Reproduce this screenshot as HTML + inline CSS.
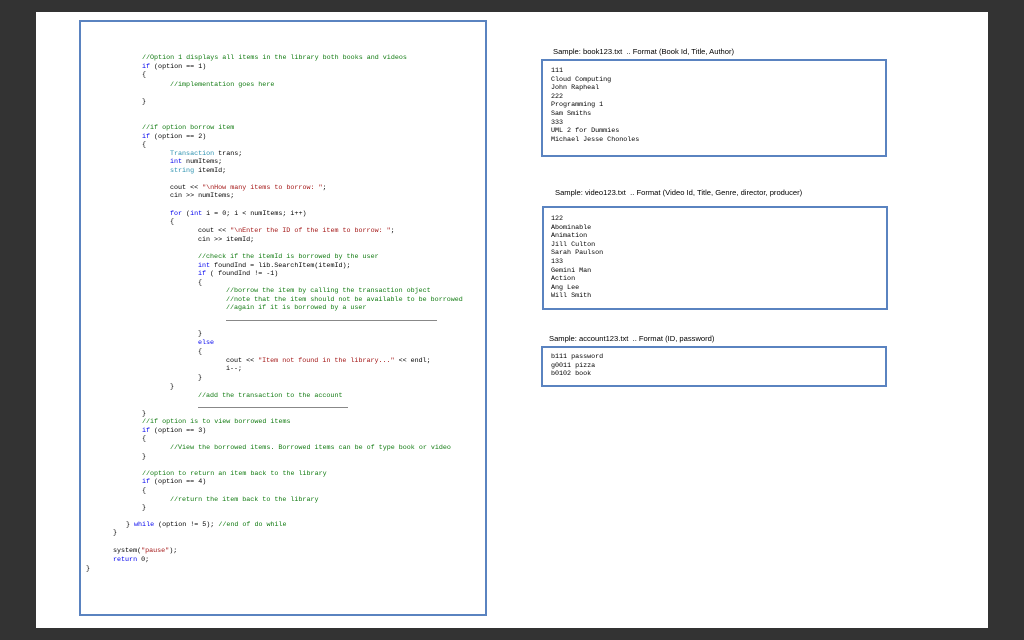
<!DOCTYPE html>
<html><head><meta charset="utf-8">
<style>
html,body{margin:0;padding:0}
body{width:1024px;height:640px;background:#333;position:relative;overflow:hidden}
.page{position:absolute;left:36px;top:12px;width:952px;height:616px;background:#fff}
.box{position:absolute;border:2px solid #5a83c0;box-sizing:border-box}
.l{position:absolute;font-family:"Liberation Mono",monospace;font-size:6.7px;line-height:8px;white-space:pre;color:#000}
.m{line-height:8.6px}
.c{color:#107a10}.k{color:#0000ee}.s{color:#a31515}.t{color:#2b91af}
.lab{position:absolute;font-family:"Liberation Sans",sans-serif;font-size:7.6px;color:#000;white-space:pre}
.u{position:absolute;height:1px;background:#888}
</style></head><body>
<div class="page"></div>
<div class="box" style="left:79px;top:20px;width:408px;height:596px"></div>

<div class="l c" style="left:142px;top:54px">//Option 1 displays all items in the library both books and videos</div>
<div class="l" style="left:142px;top:63px"><span class="k">if</span> (option == 1)</div>
<div class="l" style="left:142px;top:71px">{</div>
<div class="l c" style="left:170px;top:81px">//implementation goes here</div>
<div class="l" style="left:142px;top:98px">}</div>
<div class="l c" style="left:142px;top:124px">//if option borrow item</div>
<div class="l" style="left:142px;top:133px"><span class="k">if</span> (option == 2)</div>
<div class="l" style="left:142px;top:141px">{</div>
<div class="l" style="left:170px;top:150px"><span class="t">Transaction</span> trans;</div>
<div class="l" style="left:170px;top:158px"><span class="k">int</span> numItems;</div>
<div class="l" style="left:170px;top:167px"><span class="t">string</span> itemId;</div>
<div class="l" style="left:170px;top:184px">cout &lt;&lt; <span class="s">"\nHow many items to borrow: "</span>;</div>
<div class="l" style="left:170px;top:192px">cin &gt;&gt; numItems;</div>
<div class="l" style="left:170px;top:210px"><span class="k">for</span> (<span class="k">int</span> i = 0; i &lt; numItems; i++)</div>
<div class="l" style="left:170px;top:218px">{</div>
<div class="l" style="left:198px;top:227px">cout &lt;&lt; <span class="s">"\nEnter the ID of the item to borrow: "</span>;</div>
<div class="l" style="left:198px;top:236px">cin &gt;&gt; itemId;</div>
<div class="l c" style="left:198px;top:253px">//check if the itemId is borrowed by the user</div>
<div class="l" style="left:198px;top:262px"><span class="k">int</span> foundInd = lib.SearchItem(itemId);</div>
<div class="l" style="left:198px;top:270px"><span class="k">if</span> ( foundInd != -1)</div>
<div class="l" style="left:198px;top:279px">{</div>
<div class="l c" style="left:226px;top:287px">//borrow the item by calling the transaction object</div>
<div class="l c" style="left:226px;top:296px">//note that the item should not be available to be borrowed</div>
<div class="l c" style="left:226px;top:304px">//again if it is borrowed by a user</div>
<div class="u" style="left:226px;top:320px;width:211px"></div>
<div class="l" style="left:198px;top:330px">}</div>
<div class="l k" style="left:198px;top:339px">else</div>
<div class="l" style="left:198px;top:348px">{</div>
<div class="l" style="left:226px;top:357px">cout &lt;&lt; <span class="s">"Item not found in the library..."</span> &lt;&lt; endl;</div>
<div class="l" style="left:226px;top:365px">i--;</div>
<div class="l" style="left:198px;top:374px">}</div>
<div class="l" style="left:170px;top:383px">}</div>
<div class="l c" style="left:198px;top:392px">//add the transaction to the account</div>
<div class="u" style="left:198px;top:407px;width:150px"></div>
<div class="l" style="left:142px;top:410px">}</div>
<div class="l c" style="left:142px;top:418px">//if option is to view borrowed items</div>
<div class="l" style="left:142px;top:427px"><span class="k">if</span> (option == 3)</div>
<div class="l" style="left:142px;top:435px">{</div>
<div class="l c" style="left:170px;top:444px">//View the borrowed items. Borrowed items can be of type book or video</div>
<div class="l" style="left:142px;top:453px">}</div>
<div class="l c" style="left:142px;top:470px">//option to return an item back to the library</div>
<div class="l" style="left:142px;top:478px"><span class="k">if</span> (option == 4)</div>
<div class="l" style="left:142px;top:487px">{</div>
<div class="l c" style="left:170px;top:496px">//return the item back to the library</div>
<div class="l" style="left:142px;top:504px">}</div>
<div class="l" style="left:126px;top:521px">} <span class="k">while</span> (option != 5); <span class="c">//end of do while</span></div>
<div class="l" style="left:113px;top:529px">}</div>
<div class="l" style="left:113px;top:547px">system(<span class="s">"pause"</span>);</div>
<div class="l" style="left:113px;top:556px"><span class="k">return</span> 0;</div>
<div class="l" style="left:86px;top:565px">}</div>

<div class="lab" style="left:553px;top:47px">Sample: book123.txt  .. Format (Book Id, Title, Author)</div>
<div class="box" style="left:541px;top:59px;width:346px;height:98px"></div>
<div class="l m" style="left:551px;top:67px">111
Cloud Computing
John Rapheal
222
Programming 1
Sam Smiths
333
UML 2 for Dummies
Michael Jesse Chonoles</div>

<div class="lab" style="left:555px;top:188px">Sample: video123.txt  .. Format (Video Id, Title, Genre, director, producer)</div>
<div class="box" style="left:542px;top:206px;width:346px;height:104px"></div>
<div class="l m" style="left:551px;top:215px">122
Abominable
Animation
Jill Culton
Sarah Paulson
133
Gemini Man
Action
Ang Lee
Will Smith</div>

<div class="lab" style="left:549px;top:334px">Sample: account123.txt  .. Format (ID, password)</div>
<div class="box" style="left:541px;top:346px;width:346px;height:41px"></div>
<div class="l m" style="left:551px;top:353px">b111 password
g0011 pizza
b0102 book</div>
</body></html>
